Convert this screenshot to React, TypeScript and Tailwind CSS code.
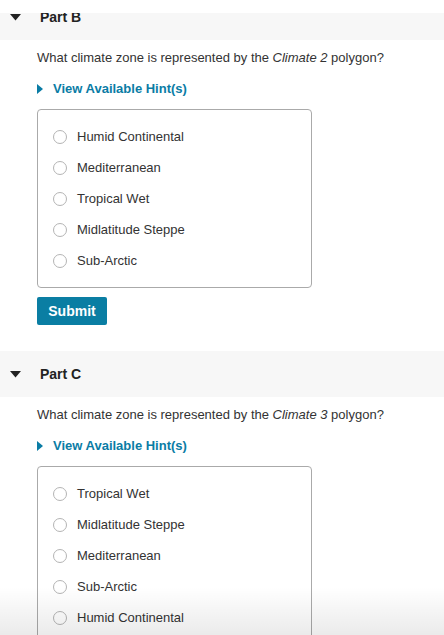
import * as React from "react"

type Part = {
  label: string
  climate: string
  options: string[]
}

const PARTS: Part[] = [
  {
    label: "Part B",
    climate: "Climate 2",
    options: ["Humid Continental", "Mediterranean", "Tropical Wet", "Midlatitude Steppe", "Sub-Arctic"],
  },
  {
    label: "Part C",
    climate: "Climate 3",
    options: ["Tropical Wet", "Midlatitude Steppe", "Mediterranean", "Sub-Arctic", "Humid Continental"],
  },
]

function DownTriangle() {
  return (
    <svg width="11" height="7" viewBox="0 0 11 7" className="block">
      <path d="M0 0 H11 L5.5 6.5 Z" fill="#222" />
    </svg>
  )
}

function RightTriangle() {
  return (
    <svg width="6" height="10" viewBox="0 0 6 10" className="block">
      <path d="M0 0 L6 5 L0 10 Z" fill="#0a7ca5" />
    </svg>
  )
}

function Radio() {
  return <span className="block h-[14px] w-[14px] shrink-0 rounded-full border border-[#b4b4b4] bg-white" />
}

function PartBlock({ part, withSubmit }: { part: Part; withSubmit?: boolean }) {
  return (
    <section>
      <div className="flex h-[46px] items-center bg-[#f7f7f7]">
        <span className="w-[40px] pl-[10px]">
          <DownTriangle />
        </span>
        <h2 className="text-[14px] font-bold text-[#222]">{part.label}</h2>
      </div>

      <div className="pl-[37px]">
        <p className="pt-[9px] text-[13px] leading-[18px] text-[#333]">
          What climate zone is represented by the <i>{part.climate}</i> polygon?
        </p>

        <div className="mt-[13px] flex items-center gap-[10px] text-[13px] font-bold leading-[18px] text-[#0a7ca5]">
          <RightTriangle />
          <span>View Available Hint(s)</span>
        </div>

        <div className="mt-[11px] w-[275px] rounded-[4px] border border-[#aaa] pt-[11px] pb-[11px] pl-[15px]">
          {part.options.map((opt) => (
            <label key={opt} className="flex h-[31px] items-center gap-[10px] text-[13px] text-[#333]">
              <Radio />
              <span>{opt}</span>
            </label>
          ))}
        </div>

        {withSubmit && (
          <button className="mt-[9px] h-[28px] w-[70px] rounded-[2px] bg-[#0a7ea3] text-[14px] font-bold text-white">
            Submit
          </button>
        )}
      </div>
    </section>
  )
}

export default function App() {
  return (
    <div
      className="relative h-[635px] w-full overflow-hidden bg-white"
      style={{ fontFamily: '"Liberation Sans", Arial, sans-serif' }}
    >
      <div className="-mt-[6px]">
        <PartBlock part={PARTS[0]} withSubmit />
        <div className="mt-[26px]">
          <PartBlock part={PARTS[1]} />
        </div>
      </div>

      {/* scroll clip at the top */}
      <div className="absolute inset-x-0 top-0 h-[13px] bg-white" />
      {/* fade at the bottom */}
      <div className="pointer-events-none absolute inset-x-0 bottom-0 h-[48px] bg-gradient-to-b from-transparent to-black/[0.08]" />
    </div>
  )
}
